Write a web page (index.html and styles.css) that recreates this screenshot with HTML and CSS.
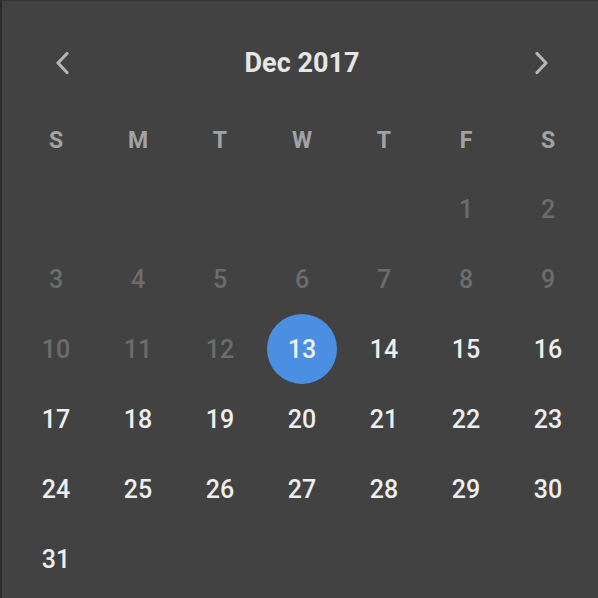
FILE: index.html
```html
<!DOCTYPE html>
<html>

<head>
    <link rel="stylesheet" href="styles.css">
</head>

<body>
    <div class="picker">
        <div class="picker-header">
            <button class="nav-btn" aria-label="Previous month">
                <svg width="14" height="24" viewBox="0 0 14 24"><polyline points="12,2.5 3,12 12,21.5" /></svg>
            </button>
            <div class="month-title">Dec 2017</div>
            <button class="nav-btn" aria-label="Next month">
                <svg width="14" height="24" viewBox="0 0 14 24"><polyline points="2,2.5 11,12 2,21.5" /></svg>
            </button>
        </div>

        <div class="weekdays">
            <div>S</div>
            <div>M</div>
            <div>T</div>
            <div>W</div>
            <div>T</div>
            <div>F</div>
            <div>S</div>
        </div>

        <div class="days" id="days"></div>
    </div>

    <script>
        // December 2017 starts on a Friday; days before the 13th are disabled
        var days = document.getElementById('days');
        var firstWeekday = 5;
        var selected = 13;

        for (var i = 0; i < firstWeekday; i++) {
            var blank = document.createElement('div');
            blank.className = 'day';
            days.appendChild(blank);
        }

        for (var d = 1; d <= 31; d++) {
            var cell = document.createElement('div');
            cell.className = 'day';
            var label = document.createElement('span');
            label.innerText = d;
            if (d < selected) cell.className += ' disabled';
            if (d === selected) cell.className += ' selected';
            cell.appendChild(label);
            days.appendChild(cell);
        }
    </script>
</body>

</html>
```

FILE: styles.css
```css
html,
body {
    margin: 0;
    height: 100%;
}

body {
    background-color: #424242;
    font-family: Roboto, "Liberation Sans", sans-serif;
    border-left: 2px solid #2c2c2c;
    border-top: 1px solid #333333;
    box-sizing: border-box;
}

.picker {
    padding-top: 27px;
}

.picker-header {
    display: flex;
    align-items: center;
    justify-content: space-between;
    height: 70px;
    padding: 0 36px 0 40px;
}

.nav-btn {
    width: 40px;
    height: 40px;
    display: flex;
    align-items: center;
    justify-content: center;
    background: none;
    border: none;
    padding: 0;
    cursor: pointer;
}

.nav-btn polyline {
    fill: none;
    stroke: #b4b4b4;
    stroke-width: 3.2;
    stroke-linecap: round;
    stroke-linejoin: round;
}

.month-title {
    color: #e6e6e6;
    font-size: 27px;
    font-weight: 700;
}

.weekdays,
.days {
    display: grid;
    grid-template-columns: repeat(7, 82px);
    padding-left: 13px;
}

.weekdays {
    margin-top: 8px;
    height: 68px;
    align-items: center;
}

.weekdays div {
    text-align: center;
    color: #a2a2a2;
    font-size: 23px;
    font-weight: 700;
}

.day {
    height: 70px;
    display: flex;
    align-items: center;
    justify-content: center;
    color: #eeeeee;
    font-size: 25px;
    font-weight: 500;
}

.day span {
    width: 70px;
    height: 70px;
    border-radius: 50%;
    display: flex;
    align-items: center;
    justify-content: center;
}

.day.disabled {
    color: #6c6c6c;
}

.day.selected span {
    background-color: #4a8fe2;
    color: #f0f0f0;
}
```
